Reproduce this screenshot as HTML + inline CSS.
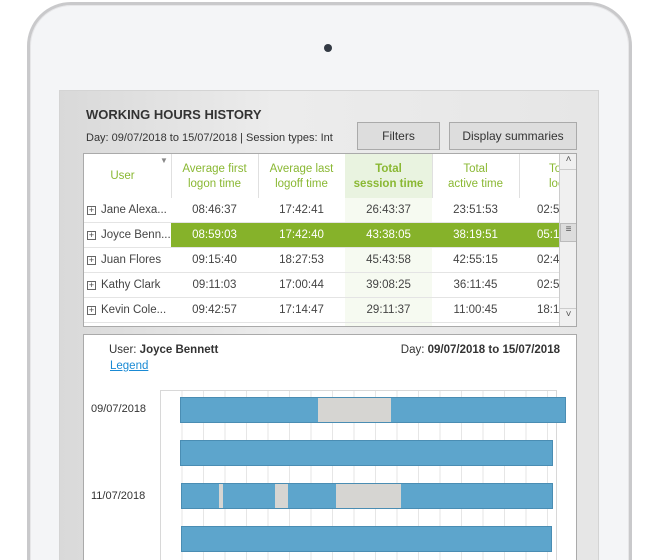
<!DOCTYPE html><html><head><style>
*{margin:0;padding:0;box-sizing:border-box}
html,body{width:657px;height:560px;overflow:hidden}
body{background:#fff;font-family:"Liberation Sans",sans-serif;position:relative}
#wrap{position:absolute;left:0;top:0;width:657px;height:560px;overflow:hidden}
.tab{position:absolute;left:27px;top:2px;width:605px;height:640px;border-radius:44px;background:#f4f5f7;border:3px solid #c9c9cb;box-shadow:inset 0 0 0 1px #e6e6e8}
.cam{position:absolute;left:324px;top:44px;width:8px;height:8px;border-radius:50%;background:#333a44}
.scr{position:absolute;left:59px;top:90px;width:540px;height:480px;background:linear-gradient(90deg,#d9d9d9,#ececec 40%,#e6e6e6);border:1px solid #d4d4d4}
.t{position:absolute;font-size:11.5px;color:#333}
.btn{position:absolute;top:122px;height:28px;background:#ddd;border:1px solid #aaa;font-size:12px;color:#333;text-align:center;line-height:26px}
.grid{position:absolute;left:83px;top:153px;width:494px;height:174px;background:#fff;border:1px solid #aaa;overflow:hidden}
.c{position:absolute;text-align:center;font-size:11.5px;color:#444}
.h{color:#8ab833;line-height:15px}
.sb{position:absolute;left:475px;top:0;width:18px;height:172px;background:#f0f0f0;border-left:1px solid #ccc}
.chart{position:absolute;left:83px;top:334px;width:494px;height:240px;background:#fff;border:1px solid #aaa;overflow:hidden}
.bar{position:absolute;height:26px;background:#5da5cc;border:1px solid #4a8db3}
.gr{position:absolute;height:24px;background:#d6d5d2;top:0}
</style></head><body><div id="wrap">
<div class="tab"></div><div class="cam"></div>
<div class="scr"></div>
<div class="t" style="left:86px;top:107px;font-weight:bold;font-size:13px;color:#333">WORKING HOURS HISTORY</div>
<div class="t" style="left:86px;top:132px;font-size:11px">Day: 09/07/2018 to 15/07/2018 | Session types: Int</div>
<div class="btn" style="left:357px;width:83px">Filters</div>
<div class="btn" style="left:449px;width:128px">Display summaries</div>
<div class="grid">
<div style="position:absolute;left:261px;top:0;width:87px;height:172px;background:#f6faf1"></div>
<div style="position:absolute;left:261px;top:0;width:87px;height:44px;background:#e9f3e0"></div>
<div class="c h" style="left:0;width:77px;top:15px">User</div>
<div style="position:absolute;left:76px;top:2px;font-size:8px;color:#888">▼</div>
<div class="c h" style="left:87px;width:87px;top:8px">Average first<br>logon time</div>
<div class="c h" style="left:174px;width:87px;top:8px">Average last<br>logoff time</div>
<div class="c h" style="left:261px;width:87px;top:8px;font-weight:bold">Total<br>session time</div>
<div class="c h" style="left:348px;width:87px;top:8px">Total<br>active time</div>
<div class="c h" style="left:435px;width:87px;top:8px;text-align:left;padding-left:30px">To<br>locked</div>
<div style="position:absolute;left:87px;top:0;width:1px;height:44px;background:#e0e0e0"></div>
<div style="position:absolute;left:174px;top:0;width:1px;height:44px;background:#e0e0e0"></div>
<div style="position:absolute;left:348px;top:0;width:1px;height:44px;background:#e0e0e0"></div>
<div style="position:absolute;left:435px;top:0;width:1px;height:44px;background:#e0e0e0"></div>
<div style="position:absolute;left:87px;top:69px;width:388px;height:25px;background:#86b22a"></div>
<div id="rows"></div>
<div class="sb"><div style="text-align:center;font-size:10px;color:#555;height:16px;border-bottom:1px solid #ccc">˄</div>
<div style="position:absolute;top:69px;left:0;width:17px;height:19px;background:#ddd;border:1px solid #bbb;text-align:center;font-size:10px;color:#555">≡</div>
<div style="position:absolute;top:154px;width:17px;text-align:center;font-size:10px;color:#555;border-top:1px solid #ccc">˅</div></div>
</div>
<div class="chart">
<div class="t" style="left:25px;top:9px">User: <b>Joyce Bennett</b></div>
<div class="t" style="left:26px;top:25px;color:#1a8ad4;text-decoration:underline">Legend</div>
<div class="t" style="right:16px;top:9px">Day: <b>09/07/2018 to 15/07/2018</b></div>
<div style="position:absolute;left:76px;top:55px;width:397px;height:200px;border:1px solid #d8d8d8;background:repeating-linear-gradient(90deg,transparent 0,transparent 20.5px,#e6e6e6 20.5px,#e6e6e6 21.5px)"></div>
<div class="t" style="left:7px;top:68px;font-size:11px">09/07/2018</div>
<div class="t" style="left:7px;top:155px;font-size:11px">11/07/2018</div>
<div class="bar" style="left:96px;top:62px;width:386px"><div class="gr" style="left:137px;width:73px"></div></div>
<div class="bar" style="left:96px;top:105px;width:373px"></div>
<div class="bar" style="left:97px;top:148px;width:372px"><div class="gr" style="left:37px;width:4px"></div><div class="gr" style="left:93px;width:13px"></div><div class="gr" style="left:154px;width:65px"></div></div>
<div class="bar" style="left:97px;top:191px;width:371px"></div>
</div>
</div>
<script>
var d=[["Jane Alexa...","08:46:37","17:42:41","26:43:37","23:51:53","02:5"],["Joyce Benn...","08:59:03","17:42:40","43:38:05","38:19:51","05:1"],["Juan Flores","09:15:40","18:27:53","45:43:58","42:55:15","02:4"],["Kathy Clark","09:11:03","17:00:44","39:08:25","36:11:45","02:5"],["Kevin Cole...","09:42:57","17:14:47","29:11:37","11:00:45","18:1"]];
var h="";d.forEach(function(r,i){var y=44+i*25,col=i==1?"#fff":"#444";
h+='<div style="position:absolute;left:0;top:'+(y+24)+'px;width:475px;height:1px;background:#e4e4e4"></div>';
h+='<div class="c" style="left:3px;top:'+(y+6)+'px;text-align:left;white-space:nowrap"><span style="display:inline-block;width:9px;height:9px;border:1px solid #666;font-size:9px;line-height:7px;text-align:center;margin-right:5px">+</span>'+r[0]+'</div>';
for(var k=1;k<5;k++)h+='<div class="c" style="left:'+(87*k)+'px;width:87px;top:'+(y+6)+'px;color:'+col+'">'+r[k]+'</div>';
h+='<div class="c" style="left:453px;top:'+(y+6)+'px;color:'+col+'">'+r[5]+'</div>';});
document.getElementById("rows").innerHTML=h;
</script>
</body></html>
